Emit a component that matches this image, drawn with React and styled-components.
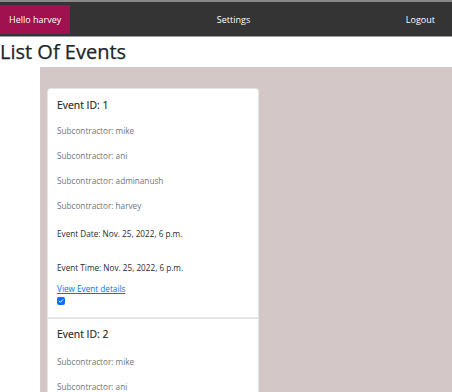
import React from "react";
import styled, { createGlobalStyle } from "styled-components";

const Global = createGlobalStyle`
  html, body { margin: 0; padding: 0; background: #fff; height: 100%; }
  body { font-family: "Open Sans", "Noto Sans", sans-serif; color: #212529; overflow: hidden; }
  #root { height: 100%; display: flex; flex-direction: column; }
  * { box-sizing: border-box; }
`;

const Nav = styled.nav`
  display: flex;
  flex: none;
  align-items: center;
  justify-content: space-between;
  height: 37px;
  background: #343434;
  border-top: 2px solid #8a8a8a;
  border-bottom: 1px solid #9a9a9a;
  padding: 2px 8px 2px 0;
`;

const NavItem = styled.a`
  display: flex;
  align-items: center;
  height: 29px;
  padding: 0 9px;
  font-size: 9px;
  font-weight: 500;
  color: #fff;
  text-decoration: none;
  background: ${(p) => (p.$active ? "#a1104f" : "transparent")};
`;

const Title = styled.h1`
  flex: none;
  margin: 0;
  font-size: 20px;
  font-weight: 500;
  line-height: 29px;
  color: #212529;
  -webkit-text-stroke: 0.25px #212529;
`;

const Board = styled.div`
  flex: 1;
  min-height: 0;
  overflow: hidden;
  margin-left: 40px;
  margin-top: 1px;
  background: #d3c7c8;
  padding: 21px 7px 0;
`;

const Card = styled.div`
  width: 212px;
  background: #fff;
  border: 1px solid rgba(0, 0, 0, 0.1);
  border-radius: ${(p) => (p.$first ? "4px 4px 0 0" : "0")};
  padding: ${(p) => (p.$first ? "10px" : "9px")} 9px 12px;
`;

const Heading = styled.h5`
  margin: 0 0 ${(p) => (p.$first ? 14 : 16)}px;
  font-size: 10.4px;
  font-weight: 500;
  line-height: 13px;
  color: #212529;
  -webkit-text-stroke: 0.15px #212529;
`;

const Field = styled.p`
  margin: 0 0 ${(p) => p.$gap}px;
  font-size: 8.2px;
  font-weight: 500;
  line-height: 10px;
  white-space: nowrap;
  color: ${(p) => (p.$muted ? "#6c757d" : "#2b2b2b")};
`;

const Link = styled.a`
  display: block;
  font-size: 8.2px;
  font-weight: 500;
  line-height: 10px;
  color: #0d6efd;
  text-decoration: underline;
  margin: 1px 0 3px;
`;

const Check = styled.span`
  display: flex;
  align-items: center;
  justify-content: center;
  width: 8px;
  height: 8px;
  border-radius: 2px;
  background: #0d6efd;
`;

const events = [
  {
    id: 1,
    subs: ["mike", "ani", "adminanush", "harvey"],
    date: "Nov. 25, 2022, 6 p.m.",
    time: "Nov. 25, 2022, 6 p.m.",
  },
  {
    id: 2,
    subs: ["mike", "ani", "adminanush", "harvey"],
    date: "Nov. 25, 2022, 6 p.m.",
    time: "Nov. 25, 2022, 6 p.m.",
  },
];

export default function App() {
  return (
    <>
      <Global />
      <Nav>
        <NavItem $active>Hello harvey</NavItem>
        <NavItem>Settings</NavItem>
        <NavItem>Logout</NavItem>
      </Nav>
      <Title>List Of Events</Title>
      <Board>
        {events.map((ev, i) => (
          <Card key={ev.id} $first={i === 0}>
            <Heading $first={i === 0}>Event ID: {ev.id}</Heading>
            {ev.subs.map((s, j) => (
              <Field key={s} $muted $gap={j === ev.subs.length - 1 ? 18 : 15}>
                Subcontractor: {s}
              </Field>
            ))}
            <Field $gap={24}>Event Date: {ev.date}</Field>
            <Field $gap={11}>Event Time: {ev.time}</Field>
            <Link href="#">View Event details</Link>
            <Check>
              <svg width="6" height="6" viewBox="0 0 12 12">
                <path d="M2.5 6.2l2.3 2.3 4.7-5" fill="none" stroke="#fff" strokeWidth="2" strokeLinecap="round" strokeLinejoin="round" />
              </svg>
            </Check>
          </Card>
        ))}
      </Board>
    </>
  );
}
